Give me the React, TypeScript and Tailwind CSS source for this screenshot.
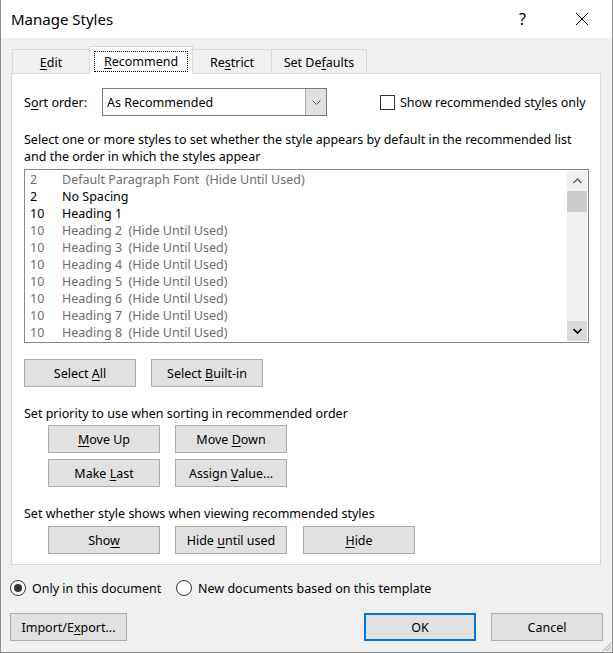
import React from "react";

const rows: { n: string; name: string; hidden: boolean }[] = [
  { n: "2", name: "Default Paragraph Font", hidden: true },
  { n: "2", name: "No Spacing", hidden: false },
  { n: "10", name: "Heading 1", hidden: false },
  { n: "10", name: "Heading 2", hidden: true },
  { n: "10", name: "Heading 3", hidden: true },
  { n: "10", name: "Heading 4", hidden: true },
  { n: "10", name: "Heading 5", hidden: true },
  { n: "10", name: "Heading 6", hidden: true },
  { n: "10", name: "Heading 7", hidden: true },
  { n: "10", name: "Heading 8", hidden: true },
];

function Btn({ children, w = "w-[112px]", extra = "" }: { children: React.ReactNode; w?: string; extra?: string }) {
  return (
    <div
      className={`${w} h-[28px] flex items-center justify-center pt-px bg-[#e1e1e1] border border-[#adadad] text-black ${extra}`}
    >
      <span>{children}</span>
    </div>
  );
}

function U({ children }: { children: React.ReactNode }) {
  return <span className="underline underline-offset-2 decoration-1">{children}</span>;
}

export default function App() {
  return (
    <div
      className="relative w-[613px] h-[653px] bg-[#f0f0f0] border-x border-b border-[#8c8c8c] flex flex-col text-[12.5px] leading-[17px] text-[#000]"
      style={{ fontFamily: '"Noto Sans", "Open Sans", sans-serif' }}
    >
      {/* Title bar */}
      <div className="h-[38px] bg-white flex items-center shrink-0">
        <div className="pl-[10px] text-[15px] leading-[20px]">Manage Styles</div>
        <div className="ml-auto flex items-center">
          <span className="text-[16px] leading-[20px] mr-[49px]">?</span>
          <svg width="14" height="14" viewBox="0 0 14 14" className="mr-[23px]">
            <path d="M1 1 L13 13 M13 1 L1 13" stroke="#000" strokeWidth="1" fill="none" />
          </svg>
        </div>
      </div>

      {/* Tabs */}
      <div className="ml-[10px] mt-[8px] flex items-end h-[28px] -mb-px">
        <div className="ml-px w-[77px] h-[25px] bg-[#f0f0f0] border-l border-t border-[#d9d9d9] flex items-center justify-center pt-px">
          <span>
            <U>E</U>dit
          </span>
        </div>
        <div className="relative z-10 w-[104px] h-[28px] bg-white border-x border-t border-[#d9d9d9] flex items-center justify-center">
          <span className="border border-dotted border-black px-[9px] leading-[19px] mt-[2px]">
            <U>R</U>ecommend
          </span>
        </div>
        <div className="w-[78px] h-[25px] bg-[#f0f0f0] border-t border-[#d9d9d9] flex items-center justify-center pt-px">
          <span>
            Re<U>s</U>trict
          </span>
        </div>
        <div className="w-[96px] h-[25px] bg-[#f0f0f0] border-x border-t border-[#d9d9d9] flex items-center justify-center pt-px">
          <span>
            Set De<U>f</U>aults
          </span>
        </div>
      </div>

      {/* Panel */}
      <div className="ml-[10px] w-[590px] bg-white border border-[#d9d9d9] pl-[12px] pt-[14px] pb-[10px] flex flex-col">
        <div className="flex items-center h-[28px]">
          <div className="w-[78px]">
            S<U>o</U>rt order:
          </div>
          <div className="w-[225px] h-[28px] border border-[#7a7a7a] flex items-stretch">
            <div className="flex-1 flex items-center pl-[4px]">As Recommended</div>
            <div className="w-[21px] bg-[#e1e1e1] border-l border-[#adadad] flex items-center justify-center">
              <svg width="9" height="5" viewBox="0 0 9 5">
                <path d="M0.5 0.5 L4.5 4.5 L8.5 0.5" stroke="#606060" strokeWidth="1" fill="none" />
              </svg>
            </div>
          </div>
          <div className="ml-[53px] w-[15px] h-[15px] border border-[#333] bg-white" />
          <div className="ml-[5px] whitespace-nowrap">
            Show recommended st<U>y</U>les only
          </div>
        </div>

        <div className="mt-[15px] whitespace-nowrap">
          Select one or more styles to set whether the style appears by default in the recommended list
          <br />
          and the order in which the styles appear
        </div>

        <div className="mt-[4px] w-[565px] h-[174px] border border-[#828790] p-px flex">
          <div className="flex-1 flex flex-col overflow-hidden">
            {rows.map((r, i) => (
              <div
                key={i}
                className={`h-[17px] flex whitespace-nowrap ${r.hidden ? "text-[#6d6d6d]" : "text-black"}`}
              >
                <span className="w-[36px] pl-[4px]">{r.n}</span>
                <span>
                  {r.name}
                  {r.hidden ? "\u00a0\u00a0(Hide Until Used)" : ""}
                </span>
              </div>
            ))}
          </div>
          <div className="w-[20px] bg-[#f0f0f0] flex flex-col">
            <div className="h-[20px] flex items-center justify-center">
              <svg width="9" height="6" viewBox="0 0 9 6">
                <path d="M0.5 5 L4.5 1 L8.5 5" stroke="#606060" strokeWidth="1.4" fill="none" />
              </svg>
            </div>
            <div className="h-[21px] bg-[#cdcdcd]" />
            <div className="flex-1" />
            <div className="h-[20px] bg-[#dadada] flex items-center justify-center">
              <svg width="9" height="6" viewBox="0 0 9 6">
                <path d="M0.5 1 L4.5 5 L8.5 1" stroke="#000" strokeWidth="1.6" fill="none" />
              </svg>
            </div>
          </div>
        </div>

        <div className="mt-[16px] flex gap-[15px]">
          <Btn>
            Select <U>A</U>ll
          </Btn>
          <Btn>
            Select <U>B</U>uilt-in
          </Btn>
        </div>

        <div className="mt-[17px] whitespace-nowrap pt-px">Set priority to use when sorting in recommended order</div>
        <div className="mt-[3px] ml-[24px] flex gap-[15px]">
          <Btn>
            <U>M</U>ove Up
          </Btn>
          <Btn>
            Move <U>D</U>own
          </Btn>
        </div>
        <div className="mt-[6px] ml-[24px] flex gap-[15px]">
          <Btn>
            Make <U>L</U>ast
          </Btn>
          <Btn>
            Assign <U>V</U>alue...
          </Btn>
        </div>

        <div className="mt-[17px] whitespace-nowrap pt-px">Set whether style shows when viewing recommended styles</div>
        <div className="mt-[4px] ml-[24px] flex">
          <Btn>
            Sho<U>w</U>
          </Btn>
          <Btn extra="ml-[15px]">
            Hide <U>u</U>ntil used
          </Btn>
          <Btn extra="ml-[16px]">
            <U>H</U>ide
          </Btn>
        </div>
      </div>

      {/* Radios */}
      <div className="mt-[15px] ml-[9px] flex items-center h-[16px]">
        <div className="w-[16px] h-[16px] rounded-full border border-[#333] bg-white flex items-center justify-center">
          <div className="w-[8px] h-[8px] rounded-full bg-[#333]" />
        </div>
        <div className="ml-[6px] w-[144px]">Only in this document</div>
        <div className="w-[16px] h-[16px] rounded-full border border-[#333] bg-white" />
        <div className="ml-[6px]">New documents based on this template</div>
      </div>

      {/* Bottom buttons */}
      <div className="mt-[17px] ml-[9px] mr-[9px] flex">
        <Btn w="w-[117px]">
          Import/E<U>x</U>port...
        </Btn>
        <div className="ml-auto flex gap-[15px]">
          <div className="w-[112px] h-[28px] flex items-center justify-center pt-px bg-[#e1e1e1] border-2 border-[#0078d7]">
            OK
          </div>
          <Btn>Cancel</Btn>
        </div>
      </div>

      {/* Resize grip */}
      <svg width="12" height="12" viewBox="0 0 12 12" className="absolute right-0 bottom-0">
        <path d="M11 3 L3 11 M11 6 L6 11 M11 9 L9 11" stroke="#a0a0a0" strokeWidth="1" fill="none" />
      </svg>
    </div>
  );
}
